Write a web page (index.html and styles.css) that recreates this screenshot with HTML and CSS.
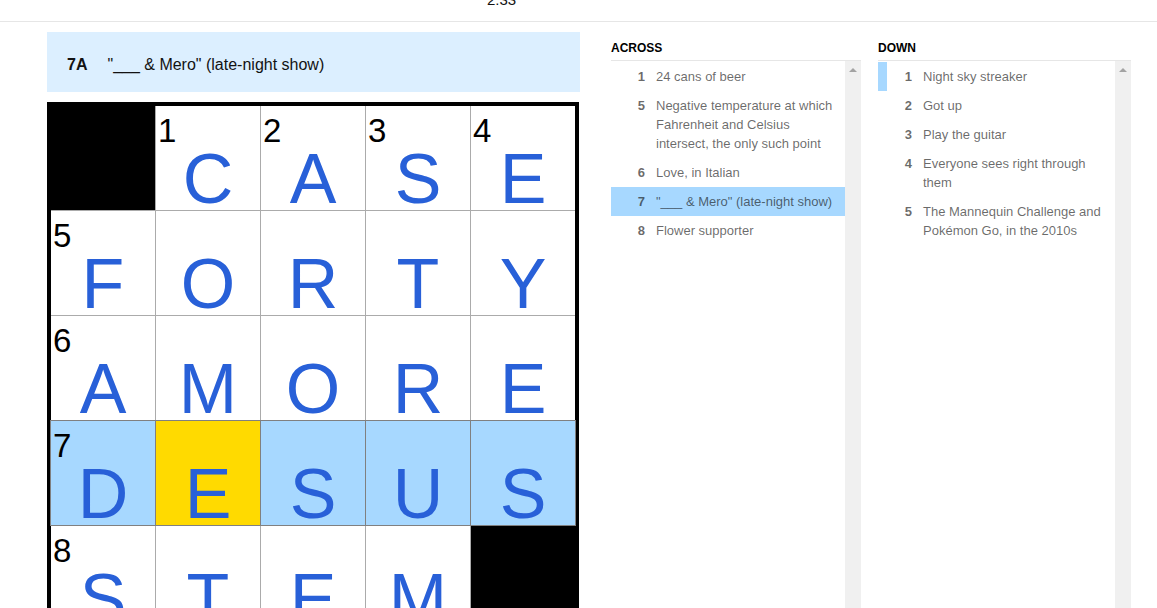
FILE: index.html
```html
<!DOCTYPE html>
<html lang="en">
<head>
  <meta charset="UTF-8">
  <title>The Mini Crossword</title>
  <meta name="viewport" content="width=device-width, initial-scale=1.0">
  <link rel="stylesheet" href="styles.css">
</head>
<body>
<header class="toolbar">
  <span class="timer">2:33</span>
</header>

<div class="layout">
  <section class="board-col">
    <div class="clue-bar">
      <span class="clue-bar-num">7A</span>
      <span class="clue-bar-text">"___ &amp; Mero" (late-night show)</span>
    </div>

    <div class="board">
      <div class="cell block"></div>
      <div class="cell"><span class="num">1</span><span class="letter">C</span></div>
      <div class="cell"><span class="num">2</span><span class="letter">A</span></div>
      <div class="cell"><span class="num">3</span><span class="letter">S</span></div>
      <div class="cell"><span class="num">4</span><span class="letter">E</span></div>

      <div class="cell"><span class="num">5</span><span class="letter">F</span></div>
      <div class="cell"><span class="letter">O</span></div>
      <div class="cell"><span class="letter">R</span></div>
      <div class="cell"><span class="letter">T</span></div>
      <div class="cell"><span class="letter">Y</span></div>

      <div class="cell"><span class="num">6</span><span class="letter">A</span></div>
      <div class="cell"><span class="letter">M</span></div>
      <div class="cell"><span class="letter">O</span></div>
      <div class="cell"><span class="letter">R</span></div>
      <div class="cell"><span class="letter">E</span></div>

      <div class="cell highlight"><span class="num">7</span><span class="letter">D</span></div>
      <div class="cell selected"><span class="letter">E</span></div>
      <div class="cell highlight"><span class="letter">S</span></div>
      <div class="cell highlight"><span class="letter">U</span></div>
      <div class="cell highlight"><span class="letter">S</span></div>

      <div class="cell"><span class="num">8</span><span class="letter">S</span></div>
      <div class="cell"><span class="letter">T</span></div>
      <div class="cell"><span class="letter">E</span></div>
      <div class="cell"><span class="letter">M</span></div>
      <div class="cell block"></div>
    </div>
  </section>

  <section class="clue-lists">
    <div class="clue-list across">
      <h3 class="list-title">Across</h3>
      <div class="list-body">
        <ol class="items">
          <li><span class="n">1</span><span class="t">24 cans of beer</span></li>
          <li><span class="n">5</span><span class="t">Negative temperature at which Fahrenheit and Celsius intersect, the only such point</span></li>
          <li><span class="n">6</span><span class="t">Love, in Italian</span></li>
          <li class="active"><span class="n">7</span><span class="t">"___ &amp; Mero" (late-night show)</span></li>
          <li><span class="n">8</span><span class="t">Flower supporter</span></li>
        </ol>
        <div class="scrollbar"><span class="arrow"></span></div>
      </div>
    </div>

    <div class="clue-list down">
      <h3 class="list-title">Down</h3>
      <div class="list-body">
        <ol class="items">
          <li class="cross"><span class="n">1</span><span class="t">Night sky streaker</span></li>
          <li><span class="n">2</span><span class="t">Got up</span></li>
          <li><span class="n">3</span><span class="t">Play the guitar</span></li>
          <li><span class="n">4</span><span class="t">Everyone sees right through them</span></li>
          <li><span class="n">5</span><span class="t">The Mannequin Challenge and Pokémon Go, in the 2010s</span></li>
        </ol>
        <div class="scrollbar"><span class="arrow"></span></div>
      </div>
    </div>
  </section>
</div>
</body>
</html>
```

FILE: styles.css
```css
:root {
  --ink: #121212;
  --line: #e6e6e6;
  --letter: #2860d8;
  --highlight: #a7d8ff;
  --selected: #ffda00;
  --clue-bar: #dcefff;
  --clue-text: rgba(18, 18, 18, 0.64);
  --scroll-bg: #f0f0f0;
}
html, body {
  margin: 0;
  padding: 0;
  height: 100%;
  overflow: hidden;
  background: #fff;
}
body {
  font-family: 'Liberation Sans', Arial, sans-serif;
  color: var(--ink);
}
.toolbar {
  height: 21px;
  border-bottom: 1px solid var(--line);
  padding-left: 487px;
  overflow: hidden;
}
.timer {
  display: block;
  font-size: 15px;
  line-height: 18px;
  margin-top: -9px;
}
.layout {
  display: flex;
  gap: 31px;
  padding: 10px 0 0 47px;
}

/* left side: clue bar + board */
.board-col {
  width: 533px;
}
.clue-bar {
  height: 60px;
  box-sizing: border-box;
  padding: 5px 0 0 20px;
  background: var(--clue-bar);
  display: flex;
  align-items: center;
  font-size: 16px;
}
.clue-bar-num {
  font-weight: 700;
  margin-right: 20px;
}
.board {
  margin-top: 10px;
  display: grid;
  grid-template-columns: repeat(5, 104px);
  grid-auto-rows: 104px;
  gap: 1px;
  width: fit-content;
  background: #ababab;
  border: 4px solid #000;
}
.cell {
  position: relative;
  background: #fff;
  display: flex;
  justify-content: center;
}
.cell.block {
  background: #000;
}
.cell.highlight {
  background: var(--highlight);
  box-shadow: 0 0 0 1px #808080;
}
.cell.selected {
  background: var(--selected);
  box-shadow: 0 0 0 1px #808080;
}
.num {
  position: absolute;
  left: 2px;
  top: 8px;
  font-size: 33px;
  line-height: 33px;
  color: #000;
}
.letter {
  font-size: 70px;
  line-height: 60px;
  padding-top: 43px;
  color: var(--letter);
}

/* right side: clue lists */
.clue-lists {
  display: flex;
  gap: 17px;
}
.clue-list.across {
  width: 250px;
}
.clue-list.down {
  width: 253px;
}
.list-title {
  margin: 6px 0 0 0;
  font-size: 12px;
  font-weight: 700;
  line-height: 20px;
  text-transform: uppercase;
  padding-bottom: 2px;
  border-bottom: 1px solid var(--line);
  color: #000;
}
.list-body {
  display: flex;
  height: 560px;
}
.items {
  flex: 1;
  list-style: none;
  margin: 0;
  padding: 1px 0 0 0;
}
.items li {
  display: flex;
  padding: 5px 8px 5px 10px;
  font-size: 13px;
  line-height: 19px;
  color: var(--clue-text);
}
.items li.active {
  background: var(--highlight);
}
.items li.cross {
  box-shadow: inset 9px 0 0 var(--highlight);
}
.items .n {
  flex-shrink: 0;
  width: 24px;
  margin-right: 11px;
  text-align: right;
  font-weight: 700;
}
.scrollbar {
  width: 16px;
  background: var(--scroll-bg);
  display: flex;
  justify-content: center;
  padding-top: 7px;
  box-sizing: border-box;
}
.arrow {
  width: 0;
  height: 0;
  border-left: 4px solid transparent;
  border-right: 4px solid transparent;
  border-bottom: 4px solid #a3a3a3;
}
```
